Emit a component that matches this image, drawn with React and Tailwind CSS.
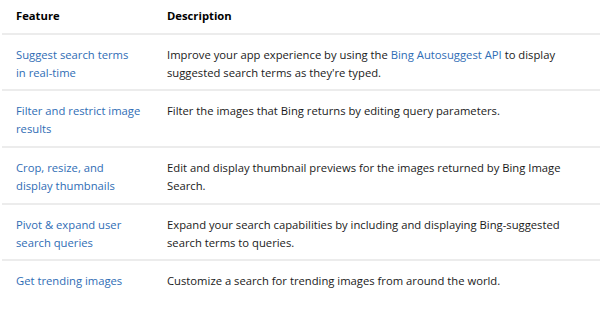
import React from "react";

const rows = [
  {
    f: ["Suggest search terms", "in real-time"],
    pb: "pb-[7px]",
    d: (
      <>
        Improve your app experience by using the{" "}
        <span className="text-[#2f6db5]">Bing Autosuggest API</span> to display suggested search terms as they're typed.
      </>
    ),
  },
  { f: ["Filter and restrict image", "results"], pb: "pb-[8px]", d: "Filter the images that Bing returns by editing query parameters." },
  { f: ["Crop, resize, and", "display thumbnails"], pb: "pb-[8px]", d: "Edit and display thumbnail previews for the images returned by Bing Image Search." },
  { f: ["Pivot & expand user", "search queries"], pb: "pb-[7px]", d: "Expand your search capabilities by including and displaying Bing-suggested search terms to queries." },
  { f: ["Get trending images"], pb: "pb-[8px]", d: "Customize a search for trending images from around the world." },
];

export default function App() {
  return (
    <div className="w-[602px] h-[314px] bg-white text-[11.25px] leading-[18px] text-[#1a1a1a]" style={{ fontFamily: '"Open Sans", sans-serif' }}>
      <div className="mx-[2px] w-[598px]">
        <div className="flex h-[35px] pt-[7px] font-bold border-b-2 border-[#ececec] text-black">
          <div className="w-[165px] pl-[14px]">Feature</div>
          <div className="flex-1">Description</div>
        </div>
        {rows.map((r, i) => (
          <div key={i} className={"flex pt-[11px] " + r.pb + " " + (i < rows.length - 1 ? "border-b-2 border-[#ececec]" : "")}>
            <div className="w-[165px] pl-[14px] pr-2 text-[#2f6db5]">
              {r.f.map((t, j) => (
                <div key={j} className="whitespace-nowrap">{t}</div>
              ))}
            </div>
            <div className="w-[400px]">{r.d}</div>
          </div>
        ))}
      </div>
    </div>
  );
}
